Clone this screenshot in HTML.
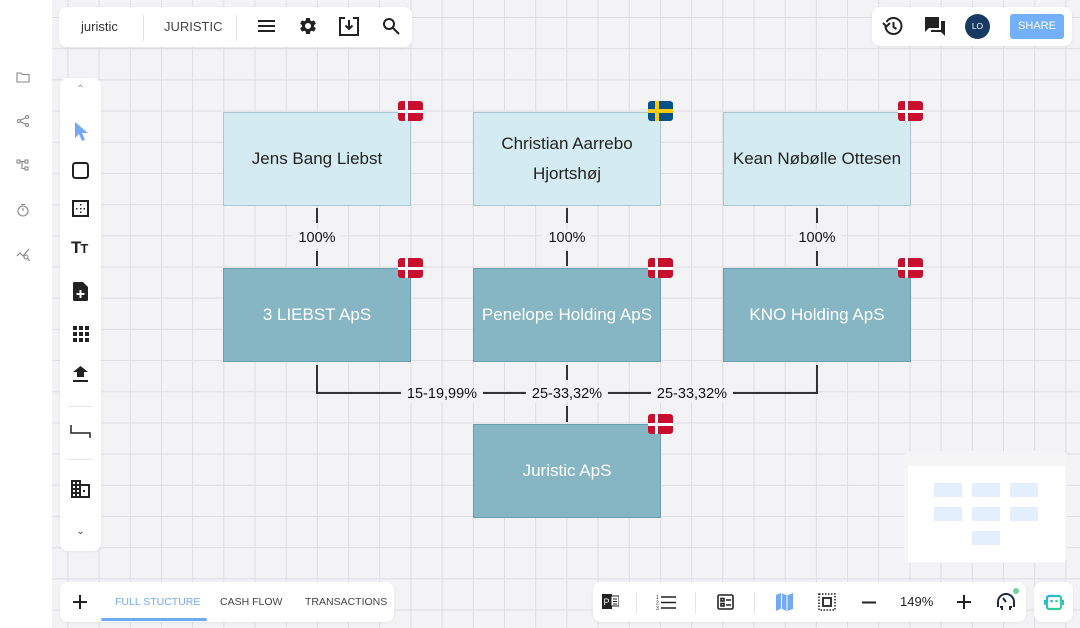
<!DOCTYPE html>
<html><head><meta charset="utf-8"><style>
*{margin:0;padding:0;box-sizing:border-box}
body{width:1080px;height:628px;overflow:hidden;position:relative;font-family:"Liberation Sans",sans-serif;background-color:#f3f3f6;
background-image:linear-gradient(#dcdce2 1px,transparent 1px),linear-gradient(90deg,#dcdce2 1px,transparent 1px);
background-size:31.2px 31.2px;background-position:5px 17px}
.side{position:absolute;left:0;top:0;width:52px;height:628px;background:#fff}
.panel{position:absolute;background:#fff;border-radius:8px;box-shadow:0 1px 3px rgba(0,0,0,.06)}
.node{position:absolute;width:188px;display:flex;align-items:center;justify-content:center;text-align:center;font-size:17px;line-height:30px}
.l{background:#d4ebf1;border:1.5px solid #a9c5cf;color:#222;height:94px}
.d{background:#86b5c3;border:1.5px solid #6a9fb0;color:#fff;height:94px}
.flag{position:absolute;width:25px;height:20px;border-radius:3px;background:#c8102e}
.flag:before{content:"";position:absolute;left:7px;top:0;width:3px;height:20px;background:#fff}
.flag:after{content:"";position:absolute;left:0;top:8.5px;width:25px;height:3px;background:#fff}
.se{background:#00538a}.se:before{background:#fecb00;left:7px;width:4px}.se:after{background:#fecb00;top:8px;height:4px}
.vl{position:absolute;width:1.5px;background:#333}
.hl{position:absolute;height:1.5px;background:#333}
.lab{position:absolute;font-size:14.5px;color:#111;background:#f3f3f6;padding:0 6px;transform:translateX(-50%);line-height:18px}
svg{position:absolute}
</style></head><body>
<div class="side"></div>
<svg style="left:16px;top:71px" width="14" height="12" viewBox="0 0 14 12" fill="none" stroke="#888" stroke-width="1.1"><path d="M1 2h4l1 1.5h7V11H1z"/></svg>
<svg style="left:16px;top:114px" width="14" height="14" viewBox="0 0 14 14" fill="none" stroke="#888" stroke-width="1.1"><circle cx="3" cy="7" r="1.5"/><circle cx="11" cy="3" r="1.5"/><circle cx="11" cy="11" r="1.5"/><path d="M4.3 6.3L9.7 3.7M4.3 7.7l5.4 2.6"/></svg>
<svg style="left:16px;top:159px" width="14" height="13" viewBox="0 0 14 13" fill="none" stroke="#888" stroke-width="1.1"><rect x="1" y="1" width="3" height="3"/><rect x="9" y="1" width="3" height="3"/><rect x="9" y="8" width="3" height="3"/><path d="M4 2.5h5M6 2.5v7h3"/></svg>
<svg style="left:16px;top:203px" width="14" height="14" viewBox="0 0 14 14" fill="none" stroke="#888" stroke-width="1.1"><circle cx="7" cy="8" r="5"/><path d="M5 1.5h4M7 8V5"/></svg>
<svg style="left:16px;top:247px" width="16" height="14" viewBox="0 0 16 14" fill="none" stroke="#888" stroke-width="1.1"><path d="M1 9l3-3 3 3 6-7"/><circle cx="10" cy="10" r="2"/><path d="M11.5 11.5L14 14"/></svg>

<div class="panel" style="left:59px;top:7px;width:353px;height:40px">
<div style="position:absolute;left:22px;top:12px;font-size:13px;color:#333">juristic</div>
<div style="position:absolute;left:84px;top:8px;width:1px;height:26px;background:#e2e2e2"></div>
<div style="position:absolute;left:105px;top:12px;font-size:13px;color:#444">JURISTIC</div>
<div style="position:absolute;left:177px;top:8px;width:1px;height:26px;background:#e2e2e2"></div>
<svg style="left:199px;top:12px" width="17" height="14"><path d="M0 2h17M0 7h17M0 12h17" stroke="#222" stroke-width="2"/></svg>
<svg style="left:239px;top:9px" width="20" height="20" viewBox="0 0 24 24"><path fill="#222" d="M19.14 12.94c.04-.3.06-.61.06-.94s-.02-.64-.07-.94l2.03-1.58a.49.49 0 00.12-.61l-1.920-3.32a.49.49 0 00-.59-.22l-2.39.96c-.5-.38-1.03-.7-1.62-.94l-.36-2.54a.48.48 0 00-.48-.41h-3.84a.48.48 0 00-.47.41l-.36 2.54c-.59.24-1.13.57-1.62.94l-2.39-.96a.48.48 0 00-.59.22L2.74 8.87a.47.47 0 00.12.61l2.03 1.58c-.05.3-.09.63-.09.94s.02.64.07.94l-2.03 1.58a.49.49 0 00-.12.61l1.92 3.32c.12.22.37.29.59.22l2.39-.96c.5.38 1.03.7 1.62.94l.36 2.540c.05.24.24.41.48.41h3.84c.24 0 .44-.17.47-.41l.36-2.54c.59-.24 1.13-.56 1.62-.94l2.39.96c.22.08.47 0 .59-.22l1.92-3.32a.47.47 0 00-.12-.61zM12 15.6A3.6 3.6 0 1112 8.4a3.6 3.6 0 010 7.2z"/></svg>
<svg style="left:280px;top:10px" width="20" height="19" viewBox="0 0 20 19" fill="none" stroke="#222" stroke-width="2"><path d="M6 1H1v17h18V1h-5M10 3v9M6.5 8.5L10 12l3.5-3.5"/></svg>
<svg style="left:323px;top:10px" width="18" height="18" viewBox="0 0 18 18" fill="none" stroke="#222" stroke-width="2"><circle cx="7" cy="7" r="5"/><path d="M11 11l6 6"/></svg>
</div>

<div class="panel" style="left:872px;top:7px;width:200px;height:39px">
<svg style="left:10px;top:9px" width="22" height="20" viewBox="0 0 22 20" fill="none" stroke="#222" stroke-width="2"><path d="M3.5 10a8 8 0 108-8 8 8 0 00-7 4"/><path d="M1 7l3.5 3.5L8 7" /><path d="M11.5 6v5l3 2"/></svg>
<svg style="left:53px;top:10px" width="20" height="19" viewBox="0 0 20 19"><path fill="#222" d="M0 0h14v11H4l-4 4zM16 4h4v15l-4-4H6v-2h10z"/></svg>
<div style="position:absolute;left:93px;top:7px;width:25px;height:25px;border-radius:50%;background:#173a63;color:#fff;font-size:8.5px;text-align:center;line-height:25px">LO</div>
<div style="position:absolute;left:138px;top:7px;width:54px;height:25px;border-radius:3px;background:#72b0fb;color:#fff;font-size:11px;text-align:center;line-height:25px">SHARE</div>
</div>

<div class="panel" style="left:60px;top:78px;width:41px;height:473px">
<div style="position:absolute;left:0;width:41px;top:6px;text-align:center;font-size:10px;color:#999">&#8963;</div>
<svg style="left:14px;top:44px" width="14" height="19" viewBox="0 0 14 19"><path fill="#72a9f5" d="M1 0v16l4-4 3 7 3-1.3-3-6.7h6z"/></svg>
<svg style="left:12px;top:84px" width="17" height="17"><rect x="1" y="1" width="15" height="15" rx="2.5" fill="none" stroke="#222" stroke-width="2"/></svg>
<svg style="left:12px;top:122px" width="17" height="17" viewBox="0 0 17 17"><rect x="1" y="1" width="15" height="15" fill="none" stroke="#222" stroke-width="2"/><g fill="#222"><rect x="8" y="4" width="1.5" height="1.5"/><rect x="8" y="8" width="1.5" height="1.5"/><rect x="8" y="11.5" width="1.5" height="1.5"/><rect x="4" y="8" width="1.5" height="1.5"/><rect x="11.5" y="8" width="1.5" height="1.5"/></g></svg>
<div style="position:absolute;left:11px;top:160px;font-weight:bold;font-size:17px;color:#222;letter-spacing:-1px">T<span style="font-size:13px">T</span></div>
<svg style="left:13px;top:204px" width="15" height="19" viewBox="0 0 15 19"><path fill="#222" d="M0 1.5A1.5 1.5 0 011.5 0H10l5 5v12.5a1.5 1.5 0 01-1.5 1.5h-12A1.5 1.5 0 010 17.5z"/><path d="M7.5 8v8M3.5 12h8" stroke="#fff" stroke-width="2"/></svg>
<svg style="left:13px;top:248px" width="16" height="16" fill="#222"><rect x="0" y="0" width="4" height="4"/><rect x="6" y="0" width="4" height="4"/><rect x="12" y="0" width="4" height="4"/><rect x="0" y="6" width="4" height="4"/><rect x="6" y="6" width="4" height="4"/><rect x="12" y="6" width="4" height="4"/><rect x="0" y="12" width="4" height="4"/><rect x="6" y="12" width="4" height="4"/><rect x="12" y="12" width="4" height="4"/></svg>
<svg style="left:13px;top:288px" width="15" height="17" viewBox="0 0 15 17"><path fill="#222" d="M4 11V6H0l7.5-6L15 6h-4v5zM0 14h15v2H0z"/></svg>
<div style="position:absolute;left:8px;top:328px;width:25px;height:1px;background:#e6e6e6"></div>
<svg style="left:10px;top:346px" width="22" height="15" fill="none" stroke="#222" stroke-width="1.5"><path d="M1 1v8h19v5"/></svg>
<div style="position:absolute;left:8px;top:381px;width:25px;height:1px;background:#e6e6e6"></div>
<svg style="left:11px;top:402px" width="19" height="18" viewBox="0 0 19 18" fill="#222"><path d="M0 0h10v4h9v14H0zM2 2v2h2V2zm4 0v2h2V2zM2 6v2h2V6zm4 0v2h2V6zm4 0v10h7V6zM2 10v2h2v-2zm4 0v2h2v-2zm6 0h2v2h-2zM2 14v2h2v-2zm4 0v2h2v-2z"/></svg>
<div style="position:absolute;left:0;width:41px;top:448px;text-align:center;font-size:10px;color:#444">&#8964;</div>
</div>

<div class="node l" style="left:223px;top:112px">Jens Bang Liebst</div>
<div class="node l" style="left:473px;top:112px">Christian Aarrebo<br>Hjortshøj</div>
<div class="node l" style="left:723px;top:112px">Kean Nøbølle Ottesen</div>
<div class="node d" style="left:223px;top:268px">3 LIEBST ApS</div>
<div class="node d" style="left:473px;top:268px">Penelope Holding ApS</div>
<div class="node d" style="left:723px;top:268px">KNO Holding ApS</div>
<div class="node d" style="left:473px;top:424px">Juristic ApS</div>
<div class="flag" style="left:398px;top:101px"></div>
<div class="flag se" style="left:648px;top:101px"></div>
<div class="flag" style="left:898px;top:101px"></div>
<div class="flag" style="left:398px;top:258px"></div>
<div class="flag" style="left:648px;top:258px"></div>
<div class="flag" style="left:898px;top:258px"></div>
<div class="flag" style="left:648px;top:414px"></div>

<div class="vl" style="left:316px;top:208px;height:15px"></div><div class="vl" style="left:316px;top:251px;height:15px"></div>
<div class="vl" style="left:566px;top:208px;height:15px"></div><div class="vl" style="left:566px;top:251px;height:15px"></div>
<div class="vl" style="left:816px;top:208px;height:15px"></div><div class="vl" style="left:816px;top:251px;height:15px"></div>
<div class="lab" style="left:317px;top:229px">100%</div>
<div class="lab" style="left:567px;top:229px">100%</div>
<div class="lab" style="left:817px;top:229px">100%</div>
<div class="vl" style="left:316px;top:365px;height:28px"></div>
<div class="vl" style="left:816px;top:365px;height:28px"></div>
<div class="hl" style="left:316px;top:392px;width:502px"></div>
<div class="vl" style="left:566px;top:365px;height:15px"></div>
<div class="vl" style="left:566px;top:406px;height:16px"></div>
<div class="lab" style="left:442px;top:385px">15-19,99%</div>
<div class="lab" style="left:567px;top:385px">25-33,32%</div>
<div class="lab" style="left:692px;top:385px">25-33,32%</div>

<div style="position:absolute;left:904px;top:451px;width:163px;height:112px;background:#f5f5f5;border-radius:6px"></div>
<div style="position:absolute;left:908px;top:466px;width:157px;height:96px;background:#fff"></div>
<div style="position:absolute;left:934px;top:483px;width:28px;height:14px;background:#e3effc"></div>
<div style="position:absolute;left:972px;top:483px;width:28px;height:14px;background:#e3effc"></div>
<div style="position:absolute;left:1010px;top:483px;width:28px;height:14px;background:#e3effc"></div>
<div style="position:absolute;left:934px;top:507px;width:28px;height:14px;background:#e3effc"></div>
<div style="position:absolute;left:972px;top:507px;width:28px;height:14px;background:#e3effc"></div>
<div style="position:absolute;left:1010px;top:507px;width:28px;height:14px;background:#e3effc"></div>
<div style="position:absolute;left:972px;top:531px;width:28px;height:14px;background:#e3effc"></div>

<div class="panel" style="left:60px;top:582px;width:334px;height:40px">
<svg style="left:13px;top:13px" width="14" height="14"><path d="M7 0v14M0 7h14" stroke="#222" stroke-width="2"/></svg>
<div style="position:absolute;left:55px;top:14px;font-size:10.5px;color:#72a9f5">FULL STUCTURE</div>
<div style="position:absolute;left:41px;top:36px;width:106px;height:3px;background:#72a9f5;border-radius:2px"></div>
<div style="position:absolute;left:160px;top:14px;font-size:10.5px;color:#444">CASH FLOW</div>
<div style="position:absolute;left:245px;top:14px;font-size:10.5px;color:#444">TRANSACTIONS</div>
</div>

<div class="panel" style="left:593px;top:582px;width:433px;height:40px">
<svg style="left:9px;top:12px" width="17" height="15" viewBox="0 0 17 15"><rect x="0" y="0" width="10" height="15" fill="#222"/><text x="1.5" y="11" font-size="9" fill="#fff" font-family="Liberation Sans">P</text><rect x="9" y="2" width="8" height="10" fill="#fff" stroke="#222"/><path d="M11 5h4M11 7.5h4M11 10h4" stroke="#222"/></svg>
<div style="position:absolute;left:43px;top:10px;width:1px;height:22px;background:#e6e6e6"></div>
<svg style="left:63px;top:12px" width="20" height="16" viewBox="0 0 20 16"><text x="0" y="5" font-size="5" fill="#222" font-family="Liberation Sans">1</text><text x="0" y="10.5" font-size="5" fill="#222" font-family="Liberation Sans">2</text><text x="0" y="16" font-size="5" fill="#222" font-family="Liberation Sans">3</text><path d="M5 3h15M5 8.5h15M5 14h15" stroke="#222" stroke-width="1.6"/></svg>
<div style="position:absolute;left:102px;top:10px;width:1px;height:22px;background:#e6e6e6"></div>
<svg style="left:124px;top:12px" width="17" height="16" viewBox="0 0 17 16" fill="none" stroke="#222" stroke-width="1.6"><rect x="1" y="1" width="15" height="14" rx="1.5"/><rect x="4" y="4.5" width="3" height="2.5"/><rect x="4" y="9.5" width="3" height="2.5"/><path d="M9 6h5M9 11h5"/></svg>
<div style="position:absolute;left:161px;top:10px;width:1px;height:22px;background:#e6e6e6"></div>
<svg style="left:183px;top:11px" width="17" height="18" viewBox="0 0 17 18"><path fill="#72a9f5" d="M0 2l5-2 6 2.5L17 0v16l-6 2-6-2.5L0 18z"/><path d="M5.5 0.5v15M11 2.5v15" stroke="#fff" stroke-width="1"/></svg>
<svg style="left:225px;top:11px" width="18" height="18" viewBox="0 0 18 18" fill="none" stroke="#222"><rect x="1" y="1" width="16" height="16" stroke-dasharray="1.5 1.5" stroke-width="1.5"/><rect x="5" y="5" width="8" height="8" stroke-width="1.8"/></svg>
<svg style="left:269px;top:19px" width="14" height="3"><path d="M0 1.5h14" stroke="#222" stroke-width="2"/></svg>
<div style="position:absolute;left:307px;top:12px;font-size:13px;color:#222">149%</div>
<svg style="left:364px;top:13px" width="14" height="14"><path d="M7 0v14M0 7h14" stroke="#222" stroke-width="2"/></svg>
<svg style="left:403px;top:10px" width="20" height="19" viewBox="0 0 20 19" fill="none" stroke="#1c2a44" stroke-width="2"><path d="M2 15V10a8 8 0 0116 0v5"/><path d="M7 6l3 4"/><path d="M4 15h2v3M16 15h-2v3"/></svg>
<div style="position:absolute;left:420px;top:6px;width:6px;height:6px;border-radius:50%;background:#6fd39a"></div>
</div>
<div class="panel" style="left:1034px;top:582px;width:39px;height:40px">
<svg style="left:10px;top:11px" width="20" height="18" viewBox="0 0 20 18"><defs><linearGradient id="g" x1="0" y1="0" x2="1" y2="1"><stop offset="0" stop-color="#1fb6e0"/><stop offset="1" stop-color="#3ed28a"/></linearGradient></defs><path d="M10 0v3" stroke="url(#g)" stroke-width="2"/><rect x="3" y="3" width="14" height="13" rx="2" fill="none" stroke="url(#g)" stroke-width="2.2"/><rect x="0" y="7" width="2" height="5" fill="url(#g)"/><rect x="18" y="7" width="2" height="5" fill="url(#g)"/><circle cx="7.5" cy="8" r="1.3" fill="#1fb6e0"/><circle cx="12.5" cy="8" r="1.3" fill="#3ed28a"/><path d="M7 12h6" stroke="url(#g)" stroke-width="1.5"/></svg>
</div>
</body></html>
